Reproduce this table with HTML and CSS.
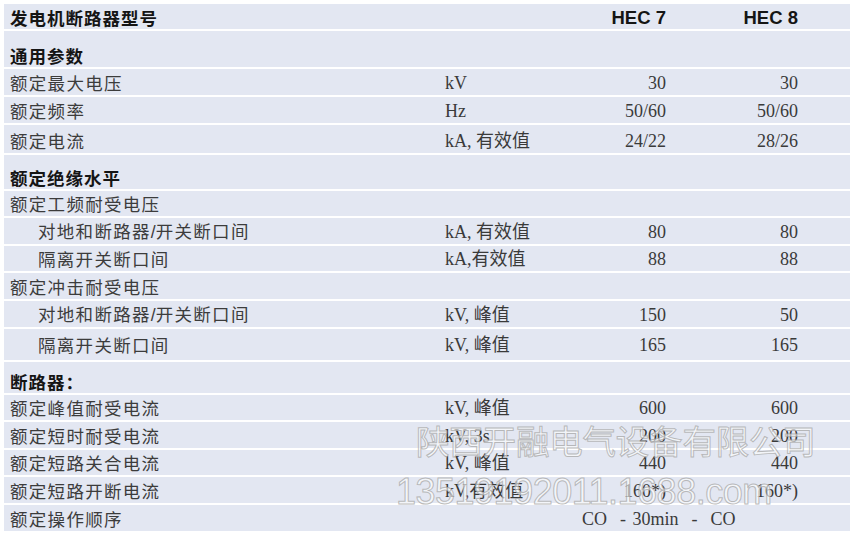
FILE: index.html
```html
<!DOCTYPE html>
<html lang="zh-CN">
<head>
<meta charset="utf-8">
<title>发电机断路器型号</title>
<link rel="stylesheet" href="styles.css">
</head>
<body>
<div class="sheet">
  <div class="table">
    <div class="row head h27">
      <div class="label">发电机断路器型号</div>
      <div class="unit"></div>
      <div class="v1 hec">HEC 7</div>
      <div class="v2 hec">HEC 8</div>
    </div>
    <div class="row sec h38"><div class="label">通用参数</div></div>
    <div class="row h28"><div class="label">额定最大电压</div><div class="unit">kV</div><div class="v1">30</div><div class="v2">30</div></div>
    <div class="row h28"><div class="label">额定频率</div><div class="unit">Hz</div><div class="v1">50/60</div><div class="v2">50/60</div></div>
    <div class="row h30"><div class="label">额定电流</div><div class="unit">kA, 有效值</div><div class="v1">24/22</div><div class="v2">28/26</div></div>
    <div class="row sec h36"><div class="label">额定绝缘水平</div></div>
    <div class="row h27"><div class="label">额定工频耐受电压</div></div>
    <div class="row h28"><div class="label indent">对地和断路器<span class="slash">/</span>开关断口间</div><div class="unit">kA, 有效值</div><div class="v1">80</div><div class="v2">80</div></div>
    <div class="row h27"><div class="label indent">隔离开关断口间</div><div class="unit">kA,有效值</div><div class="v1">88</div><div class="v2">88</div></div>
    <div class="row h28"><div class="label">额定冲击耐受电压</div></div>
    <div class="row h28"><div class="label indent">对地和断路器<span class="slash">/</span>开关断口间</div><div class="unit">kV, 峰值</div><div class="v1">150</div><div class="v2">50</div></div>
    <div class="row h33 lowpad"><div class="label indent">隔离开关断口间</div><div class="unit">kV, 峰值</div><div class="v1">165</div><div class="v2">165</div></div>
    <div class="row sec h33"><div class="label">断路器：</div></div>
    <div class="row h27"><div class="label">额定峰值耐受电流</div><div class="unit">kV, 峰值</div><div class="v1">600</div><div class="v2">600</div></div>
    <div class="row h28"><div class="label">额定短时耐受电流</div><div class="unit">kV, 3s</div><div class="v1">200</div><div class="v2">200</div></div>
    <div class="row h27"><div class="label">额定短路关合电流</div><div class="unit">kV, 峰值</div><div class="v1">440</div><div class="v2">440</div></div>
    <div class="row h28"><div class="label">额定短路开断电流</div><div class="unit">kV,有效值</div><div class="v1">160*)</div><div class="v2">160*)</div></div>
    <div class="row h28"><div class="label">额定操作顺序</div><div class="seq">CO&nbsp; - 30min &nbsp;- &nbsp;CO</div></div>
  </div>
  <div class="wm wm-name">陕西开融电气设备有限公司</div>
  <div class="wm wm-url">13519192011.1688.com</div>
</div>
</body>
</html>
```
FILE: styles.css
```css
html, body {
  margin: 0;
  padding: 0;
  background: #ffffff;
}
body {
  width: 854px;
  height: 535px;
  overflow: hidden;
}
.sheet {
  position: relative;
  padding: 4px 4px 0 4px;
}
.table {
  width: 846px;
  background: #e3e7f2;
}
.row {
  display: grid;
  grid-template-columns: 441px 160px 61px 132px 52px;
  align-items: end;
  box-sizing: border-box;
  border-bottom: 2px solid #ffffff;
  padding-bottom: 1px;
  font-family: "Liberation Serif", "Noto Sans CJK SC", serif;
  font-size: 18px;
  line-height: 22px;
  color: #3a3a3a;
}
.h27 { height: 27px; }
.h28 { height: 28px; }
.h30 { height: 30px; }
.h33 { height: 33px; }
.h36 { height: 36px; }
.h38 { height: 38px; }
.lowpad { padding-bottom: 4px; }
.label {
  padding-left: 6px;
  font-family: "Noto Sans CJK SC", sans-serif;
  font-size: 17.5px;
  letter-spacing: 1.3px;
  color: #3c3c3c;
  white-space: nowrap;
}
.label.indent { padding-left: 34px; }
.slash {
  font-family: "Liberation Sans", sans-serif;
  letter-spacing: 0;
}
.sec .label, .head .label {
  font-weight: 700;
  color: #151515;
  letter-spacing: 1px;
}
.sec { padding-bottom: 0; }
.head { padding-bottom: 0; }
.unit {
  white-space: nowrap;
}
.v1, .v2 {
  text-align: right;
  white-space: nowrap;
}
.hec {
  font-family: "Liberation Sans", Arial, sans-serif;
  font-weight: 700;
  font-size: 18.5px;
  color: #151515;
}
.seq {
  grid-column: 2 / 5;
  padding-left: 137px;
  white-space: nowrap;
  word-spacing: 2px;
}
.wm {
  position: absolute;
  white-space: nowrap;
  color: rgba(255, 255, 255, 0.6);
  -webkit-text-stroke: 1px rgba(165, 165, 165, 0.75);
  pointer-events: none;
}
.wm-name {
  left: 416px;
  top: 418px;
  font-family: "Noto Sans CJK SC", sans-serif;
  font-size: 33.5px;
  line-height: 44px;
  letter-spacing: -0.2px;
}
.wm-url {
  left: 396px;
  top: 473px;
  font-family: "Liberation Sans", Arial, sans-serif;
  font-size: 36px;
  line-height: 38px;
  letter-spacing: -0.5px;
}
```
